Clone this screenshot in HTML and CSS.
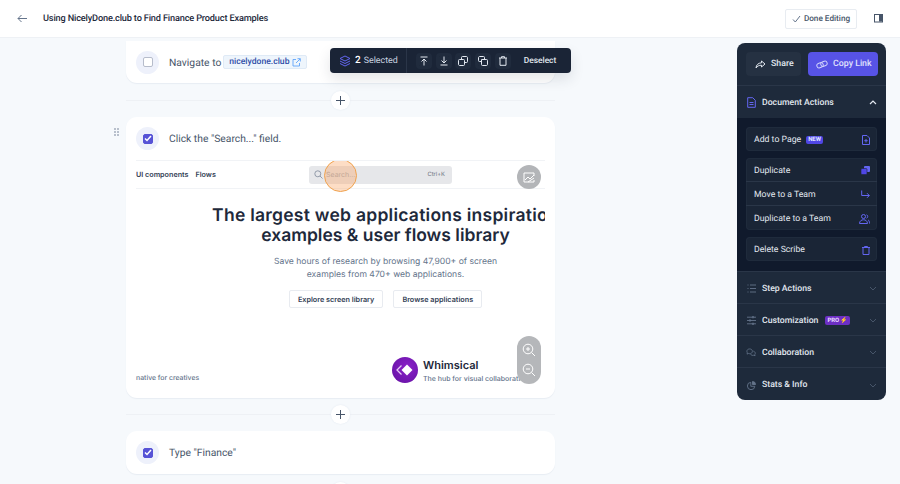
FILE: index.html
```html
<!DOCTYPE html>
<html lang="en">
<head>
<meta charset="utf-8">
<title>Using NicelyDone.club to Find Finance Product Examples</title>
<link rel="stylesheet" href="styles.css">
</head>
<body>
<header class="topbar">
  <svg class="back" width="10" height="9" viewBox="0 0 10 9" fill="none" stroke="#64748b" stroke-width="1"><path d="M10 4.500H1M4.500 1L1 4.500 4.500 8"/></svg>
  <h1 class="doc-title">Using NicelyDone.club to Find Finance Product Examples</h1>
  <button class="done-btn"><svg width="9" height="8" viewBox="0 0 9 8" fill="none" stroke="#64748b" stroke-width="1"><path d="M1 4.500L3.300 7 8 1"/></svg>Done Editing</button>
  <svg class="panel-toggle" width="9" height="9" viewBox="0 0 9 9"><rect x=".5" y=".5" width="8" height="7.500" fill="none" stroke="#475569"/><rect x="5" y="1" width="3" height="6.500" fill="#475569"/></svg>
</header>

<main class="stage">
  <section class="stream">
    <article class="card card-first">
      <div class="step-head">
        <span class="check-wrap"><span class="check"></span></span>
        <span class="step-text">Navigate to</span>
        <span class="link-chip">nicelydone.club
          <svg width="9" height="9" viewBox="0 0 9 9" fill="none" stroke="#60a5fa" stroke-width=".9"><path d="M4 1.500H1v6.500h6.500V5M5.500.7h2.800v2.800M8.200.8L4 5"/></svg>
        </span>
      </div>
    </article>

    <div class="add-row"><button class="add-btn"><svg width="9" height="9" viewBox="0 0 9 9" stroke="#475569" stroke-width="1"><path d="M4.500 0v9M0 4.500h9"/></svg></button></div>

    <article class="card card-shot">
      <span class="grip"><i></i><i></i><i></i><i></i><i></i><i></i></span>
      <div class="step-head">
        <span class="check-wrap"><span class="check on"><svg width="8" height="7" viewBox="0 0 8 7" fill="none" stroke="#fff" stroke-width="1.500"><path d="M1 3.500L3 5.500 7 1"/></svg></span></span>
        <span class="step-text">Click the "Search..." field.</span>
      </div>
      <div class="shot">
        <nav class="shot-nav">
          <div class="shot-links">
            <span>UI components</span>
            <span>Flows</span>
          </div>
          <div class="shot-search">
            <svg width="9" height="9" viewBox="0 0 9 9" fill="none" stroke="#8a93a3" stroke-width=".9"><circle cx="3.800" cy="3.800" r="3"/><path d="M6 6l2.500 2.500"/></svg>
            <span>Search...</span><kbd>Ctrl+K</kbd>
          </div>
        </nav>
        <div class="hero">
          <h2><span class="h2-first">The largest web applications inspiration</span><br>examples &amp; user flows library</h2>
          <p>Save hours of research by browsing 47,900+ of screen<br>examples from 470+ web applications.</p>
          <div class="hero-btns"><span class="hero-btn">Explore screen library</span><span class="hero-btn">Browse applications</span></div>
        </div>
        <div class="ads">
          <span class="ad-left">native for creatives</span>
          <span class="ad-logo"><svg width="18" height="14" viewBox="0 0 18 14"><path d="M11 1.500L16.500 7 11 12.500 5.500 7z" fill="#fff"/><path d="M5.500 2.500L1 7l4.500 4.500" fill="none" stroke="#e6c9f5" stroke-width="1.300"/></svg></span>
          <div class="ad-copy"><strong>Whimsical</strong><span>The hub for visual collaboration</span></div>
        </div>
        <span class="click-ring"></span>
        <span class="shot-fab"><svg width="12" height="11" viewBox="0 0 12 11" fill="none" stroke="#fff" stroke-width="1"><path d="M11 4V1H1v9h10V8M2 8l3-3 2 2 4-4M5 10l6-4"/></svg></span>
        <span class="zoom-pill">
          <svg width="14" height="14" viewBox="0 0 14 14" fill="none" stroke="#fff" stroke-width="1"><circle cx="6" cy="6" r="4.800"/><path d="M9.500 9.500L13 13M4 6h4M6 4v4"/></svg>
          <svg width="14" height="14" viewBox="0 0 14 14" fill="none" stroke="#fff" stroke-width="1"><circle cx="6" cy="6" r="4.800"/><path d="M9.500 9.500L13 13M4 6h4"/></svg>
        </span>
      </div>
    </article>

    <div class="add-row"><button class="add-btn"><svg width="9" height="9" viewBox="0 0 9 9" stroke="#475569" stroke-width="1"><path d="M4.500 0v9M0 4.500h9"/></svg></button></div>

    <article class="card">
      <div class="step-head">
        <span class="check-wrap"><span class="check on"><svg width="8" height="7" viewBox="0 0 8 7" fill="none" stroke="#fff" stroke-width="1.500"><path d="M1 3.500L3 5.500 7 1"/></svg></span></span>
        <span class="step-text">Type "Finance"</span>
      </div>
    </article>

    <div class="add-row"><button class="add-btn"><svg width="9" height="9" viewBox="0 0 9 9" stroke="#475569" stroke-width="1"><path d="M4.500 0v9M0 4.500h9"/></svg></button></div>
  </section>
</main>

<div class="selbar">
  <span class="sel-count">
    <svg width="12" height="12" viewBox="0 0 12 12" fill="none" stroke="#6366f1" stroke-width="1"><path d="M6 1L11 3.500 6 6 1 3.500zM1 6l5 2.500L11 6M1 8.500L6 11l5-2.500"/></svg>
    <b>2</b> Selected
  </span>
  <span class="sel-tools">
    <svg width="10" height="10" viewBox="0 0 10 10" fill="none" stroke="#e2e8f0" stroke-width="1"><path d="M1.500 1h7M5 9.500V3M2.500 5.500L5 3l2.500 2.500"/></svg>
    <svg width="10" height="10" viewBox="0 0 10 10" fill="none" stroke="#e2e8f0" stroke-width="1"><path d="M1.500 9h7M5 .5V7M2.500 4.500L5 7l2.500-2.500"/></svg>
    <svg width="10" height="10" viewBox="0 0 10 10" fill="none" stroke="#e2e8f0" stroke-width="1"><rect x=".5" y="3.500" width="6" height="6" rx="1"/><path d="M3.500 3V1.500a1 1 0 0 1 1-1h4a1 1 0 0 1 1 1v4a1 1 0 0 1-1 1H7"/></svg>
    <svg width="10" height="10" viewBox="0 0 10 10" fill="none" stroke="#e2e8f0" stroke-width="1"><path d="M6.500 3.500V1.500a1 1 0 0 0-1-1h-4a1 1 0 0 0-1 1v3a1 1 0 0 0 1 1h2M3.500 3.500h5a1 1 0 0 1 1 1v4a1 1 0 0 1-1 1h-4a1 1 0 0 1-1-1z"/></svg>
    <svg width="10" height="10" viewBox="0 0 10 10" fill="none" stroke="#e2e8f0" stroke-width="1"><path d="M1 2h8M3.500 2V.7h3V2M2 2v7.300h6V2"/></svg>
  </span>
  <span class="sel-clear">Deselect</span>
</div>

<aside class="panel">
  <div class="panel-top">
    <button class="pbtn pbtn-share"><svg width="11" height="9" viewBox="0 0 11 9" fill="none" stroke="#e2e8f0" stroke-width="1"><path d="M6.500 1L10 4 6.500 7V5.200C4 5.200 2.500 6 1 8c.3-3 2-5 5.500-5.200z"/></svg>Share</button>
    <button class="pbtn pbtn-copy"><svg width="12" height="9" viewBox="0 0 12 9" fill="none" stroke="#cfd2fb" stroke-width="1"><rect x=".7" y="3" width="6.500" height="4.500" rx="2.200" transform="rotate(-20 4 5)"/><rect x="4.800" y="1.500" width="6.500" height="4.500" rx="2.200" transform="rotate(-20 8 4)"/></svg>Copy Link</button>
  </div>
  <div class="sec sec-open">
    <svg class="sec-ic" width="9" height="11" viewBox="0 0 9 11" fill="none" stroke="#6366f1" stroke-width="1"><path d="M.7.700h5l2.600 2.600v7H.7zM2.500 5.500h4M2.500 7.500h4"/></svg>
    <span class="sec-label">Document Actions</span>
    <svg class="sec-chev" width="8" height="5" viewBox="0 0 8 5" fill="none" stroke="#e2e8f0" stroke-width="1.200"><path d="M1 4l3-3 3 3"/></svg>
  </div>
  <div class="actions">
    <div class="agroup">
      <div class="arow"><span>Add to Page</span><em class="new">NEW</em><svg class="aic" width="8" height="10" viewBox="0 0 8 10" fill="none" stroke="#6366f1" stroke-width="1"><path d="M.5.500h4.500L7.500 3v6.500h-7zM4 4v3.500M2.300 5.700h3.400"/></svg></div>
    </div>
    <div class="agroup">
      <div class="arow"><span>Duplicate</span><svg class="aic" width="9" height="9" viewBox="0 0 9 9"><rect x="3" y="0" width="6" height="6" rx="1" fill="#6366f1"/><rect x="0" y="2.500" width="6" height="6" rx="1" fill="#4f46e5" stroke="#1b2638" stroke-width=".6"/></svg></div>
      <div class="arow"><span>Move to a Team</span><svg class="aic" width="9" height="9" viewBox="0 0 9 9" fill="none" stroke="#6366f1" stroke-width="1"><path d="M.7.500V5.500H8.300M6 3.200l2.300 2.300L6 7.800"/></svg></div>
      <div class="arow"><span>Duplicate to a Team</span><svg class="aic" width="11" height="10" viewBox="0 0 11 10" fill="none" stroke="#6366f1" stroke-width="1"><circle cx="4.500" cy="2.500" r="2"/><path d="M.5 9.500c0-5 8-5 8 0zM7.500.8a1.800 1.800 0 0 1 0 3.400M9 5.800c1 .6 1.500 1.800 1.500 3.700"/></svg></div>
    </div>
    <div class="agroup">
      <div class="arow"><span>Delete Scribe</span><svg class="aic" width="8" height="9" viewBox="0 0 8 9" fill="none" stroke="#6366f1" stroke-width="1"><path d="M0 1.500h8M2.500 1.500V.5h3v1M1 1.500v7h6v-7"/></svg></div>
    </div>
  </div>
  <div class="sec">
    <svg class="sec-ic" width="9" height="9" viewBox="0 0 9 9" fill="none" stroke="#64748b" stroke-width=".9"><path d="M3 1h6M3 4.500h6M3 8h6M.5 1h1M.5 4.500h1M.5 8h1"/></svg>
    <span class="sec-label">Step Actions</span>
    <svg class="sec-chev" width="8" height="5" viewBox="0 0 8 5" fill="none" stroke="#475569" stroke-width="1"><path d="M1 1l3 3 3-3"/></svg>
  </div>
  <div class="sec">
    <svg class="sec-ic" width="9" height="9" viewBox="0 0 9 9" fill="none" stroke="#64748b" stroke-width=".9"><path d="M0 1.200h9M0 4.500h9M0 7.800h9"/><circle cx="6" cy="1.200" r=".8"/><circle cx="3" cy="4.500" r=".8"/><circle cx="6" cy="7.800" r=".8"/></svg>
    <span class="sec-label">Customization</span><em class="pro">PRO ⚡</em>
    <svg class="sec-chev" width="8" height="5" viewBox="0 0 8 5" fill="none" stroke="#475569" stroke-width="1"><path d="M1 1l3 3 3-3"/></svg>
  </div>
  <div class="sec">
    <svg class="sec-ic sec-ic-wide" width="11" height="9" viewBox="0 0 11 9" fill="none" stroke="#64748b" stroke-width=".9"><path d="M1 3.200C1 1.500 2.400.6 4 .6s3 .9 3 2.600S5.600 5.800 4 5.800c-.5 0-1 0-1.400-.2L1.200 6.300l.3-1.400C1.100 4.500 1 3.800 1 3.200zM8 3c1.300.3 2.200 1.200 2.200 2.400 0 .6-.2 1-.5 1.400l.3 1.300-1.400-.6c-1.400.5-3 0-3.600-1.200"/></svg>
    <span class="sec-label">Collaboration</span>
    <svg class="sec-chev" width="8" height="5" viewBox="0 0 8 5" fill="none" stroke="#475569" stroke-width="1"><path d="M1 1l3 3 3-3"/></svg>
  </div>
  <div class="sec">
    <svg class="sec-ic" width="9" height="9" viewBox="0 0 9 9" fill="none" stroke="#64748b" stroke-width=".9"><path d="M3.800 1.300a3.700 3.700 0 1 0 4 4H3.800z"/><path d="M5.500.5a3 3 0 0 1 3 3h-3z" fill="#64748b"/></svg>
    <span class="sec-label">Stats &amp; Info</span>
    <svg class="sec-chev" width="8" height="5" viewBox="0 0 8 5" fill="none" stroke="#475569" stroke-width="1"><path d="M1 1l3 3 3-3"/></svg>
  </div>
</aside>
</body>
</html>
```
FILE: styles.css
```css
* { box-sizing: border-box; }
html, body { margin: 0; height: 484px; overflow: hidden; }
body { background: #f6f9fc; font-family: Roboto, "Liberation Sans", sans-serif; color: #334155; position: relative; text-rendering: geometricPrecision; }
button { font-family: inherit; text-rendering: inherit; }

.topbar { height: 38px; background: #fff; border-bottom: 1px solid #eef1f5; display: flex; align-items: center; padding: 0 17px 0 17px; }
.back { flex: none; }
.doc-title { margin: 0 0 0 16px; font-size: 9.200px; letter-spacing: -.17px; font-weight: 500; color: #1e293b; flex: 1; }
.done-btn { height: 20px; width: 72px; display: flex; align-items: center; justify-content: center; gap: 3px; padding: 0; background: #fff; border: 1px solid #e8ecf1; border-radius: 2px; font-size: 8.200px; font-weight: 500; color: #475569; }
.panel-toggle { margin-left: 17px; }

.stage { padding: 3px 0 0 126px; }
.stream { width: 429px; }
.card { background: #fff; border-radius: 11px; box-shadow: 0 1px 1px #e8edf3; position: relative; }
.card-first { border-radius: 0 0 11px 11px; }
.card-first .step-head { height: 42px; }
.step-head { height: 43px; display: flex; align-items: center; padding-left: 10px; }
.check-wrap { width: 23px; height: 23px; border-radius: 50%; background: #eef1fb; display: flex; align-items: center; justify-content: center; flex: none; }
.check { width: 10px; height: 10px; border-radius: 2px; background: #fff; border: 1px solid #b6bccb; display: flex; align-items: center; justify-content: center; }
.check.on { background: #5753d6; border-color: #5753d6; }
.step-text { margin-left: 10px; font-size: 10.300px; color: #475569; }
.link-chip { margin-left: 2px; height: 14px; padding: 0 5px; display: flex; align-items: center; gap: 3px; background: #eef5fc; border: 1px solid #dfeaf6; border-radius: 2px; color: #2f4ea8; font-size: 8.600px; font-weight: 500; }

.add-row { height: 34px; display: flex; align-items: center; justify-content: center; background: linear-gradient(#eef1f5, #eef1f5) center / 100% 1px no-repeat; }
.card-shot + .add-row { height: 33px; }
.add-btn { width: 19px; height: 19px; padding: 0; border: 0; border-radius: 50%; background: #fff; box-shadow: 0 0 2px #e2e8f0; display: flex; align-items: center; justify-content: center; }

.grip { position: absolute; left: -12px; top: 11px; width: 5px; display: grid; grid-template-columns: 2px 2px; gap: 1px; }
.grip i { width: 2px; height: 2px; background: #b8c0cc; }

.card-shot { height: 281px; }
.shot { margin-left: 10px; width: 409px; height: 228px; position: relative; overflow: hidden; background: #fff; border-top: 1px solid #f1f3f6; font-family: Inter, sans-serif; }
.shot-nav { height: 28px; border-bottom: 1px solid #f1f3f6; display: flex; align-items: center; font-size: 7.200px; font-weight: 600; color: #334155; }
.shot-links { width: 173px; display: flex; gap: 7px; }
.shot-search { width: 143px; height: 18px; border-radius: 3px; background: #e6e7ea; display: flex; align-items: center; padding: 0 7px 0 5px; gap: 3px; font-size: 7px; font-weight: 400; color: #9aa3b0; }
.shot-search span { flex: 1; }
.shot-search kbd { font: inherit; font-size: 5.800px; color: #6b7280; }

.hero { width: 499px; text-align: center; padding-top: 17px; }
.hero h2 { margin: 0; font-size: 17.500px; line-height: 20px; font-weight: 600; color: #1e293b; white-space: nowrap; }
.h2-first { letter-spacing: .25px; }
.hero p { margin: 9.500px 0 0; font-size: 8.600px; line-height: 13px; color: #64748b; }
.hero-btns { margin-top: 8.500px; display: flex; justify-content: center; gap: 10px; }
.hero-btn { height: 18px; padding: 0 8px; display: flex; align-items: center; background: #fff; border: 1px solid #e8ebf0; border-radius: 2px; font-size: 7.250px; font-weight: 600; color: #334155; }

.ads { margin-top: 49px; display: flex; align-items: flex-end; white-space: nowrap; }
.ad-left { width: 256px; font-size: 6.900px; font-weight: 500; color: #64748b; margin-bottom: 1px; }
.ad-logo { width: 26px; height: 26px; border-radius: 50%; background: radial-gradient(circle at 60% 40%, #8a22c9, #6210a0); display: flex; align-items: center; justify-content: center; flex: none; }
.ad-copy { margin-left: 5px; display: flex; flex-direction: column; font-size: 7px; color: #64748b; font-weight: 500; }
.ad-copy strong { font-size: 11px; font-weight: 600; color: #1e293b; line-height: 14px; margin-bottom: 2px; }

.click-ring { position: absolute; left: 188px; top: -2px; width: 33px; height: 33px; border-radius: 50%; background: rgba(251, 170, 110, .4); border: 1px solid #f0a24e; }
.shot-fab { position: absolute; left: 381px; top: 4px; width: 24px; height: 24px; border-radius: 50%; background: #b3b5b8; display: flex; align-items: center; justify-content: center; }
.zoom-pill { position: absolute; left: 381px; top: 175px; width: 24px; height: 48px; border-radius: 12px; background: #b5b7ba; display: flex; flex-direction: column; align-items: center; justify-content: center; gap: 6px; }

.selbar { position: absolute; left: 330px; top: 48px; width: 241px; height: 25px; background: #1a2436; border-radius: 4px; box-shadow: 0 6px 14px rgba(30, 41, 59, .12); display: flex; align-items: center; color: #cbd5e1; font-size: 8.900px; }
.sel-count { width: 77px; height: 25px; display: flex; align-items: center; padding-left: 9px; gap: 3px; border-right: 1px solid #2a3548; }
.sel-count b { margin-left: 1px; color: #fff; font-size: 10px; font-weight: 500; }
.sel-tools { margin-left: 12px; display: flex; gap: 9.700px; }
.sel-tools svg { background: #202b3d; outline: 3px solid #202b3d; border-radius: 1px; }
.sel-clear { margin-left: 16px; color: #e2e8f0; font-weight: 500; font-size: 8.400px; }

.panel { position: absolute; left: 737px; top: 43px; width: 149px; height: 357px; background: #1e2a3b; border-radius: 8px; overflow: hidden; }
.panel-top { height: 43px; padding: 9px 8px 0 9px; display: flex; gap: 7px; border-bottom: 1px solid #2a3648; }
.pbtn { height: 24px; border: 0; border-radius: 4px; display: flex; align-items: center; padding: 0; font-size: 8.800px; font-weight: 500; }
.pbtn-share { width: 55px; padding-left: 9px; gap: 5px; background: #253142; color: #e2e8f0; }
.pbtn-copy { width: 70px; padding-left: 8px; gap: 5px; background: #5753e6; color: #e0e2fd; }
.sec { height: 32px; display: flex; align-items: center; padding: 2px 9px 0 10px; border-bottom: 1px solid #2a3648; }
.sec:last-child { border-bottom: 0; }
.sec-open { height: 32px; padding-top: 1px; border-bottom: 0; }
.sec-ic { width: 9px; flex: none; }
.sec-ic-wide { margin-left: -1px; width: 10px; }
.sec-label { margin-left: 6px; font-size: 8.700px; font-weight: 500; color: #e2e8f0; white-space: nowrap; }
.sec-chev { margin-left: auto; }
.actions { height: 154px; background: #101a2c; padding: 9px 9px 0; display: flex; flex-direction: column; gap: 7px; border-bottom: 1px solid #2a3648; }
.agroup { background: #1a2536; border-radius: 4px; box-shadow: inset 0 0 0 1px #1f2b3c; }
.arow { height: 24px; display: flex; align-items: center; padding: 1px 7px 0 8px; font-size: 8.700px; color: #e2e8f0; border-bottom: 1px solid #2a3648; }
.agroup + .agroup .arow { padding-top: 2px; }
.arow:last-child { border-bottom: 0; }
.aic { margin-left: auto; }
.new { margin-left: 5px; padding: 0 2px; height: 8px; line-height: 8px; border-radius: 2px; background: #4f46e5; color: #dfe3ff; font-size: 6px; font-style: normal; font-weight: 700; }
.pro { margin-left: 7px; padding: 0 2px; height: 9px; line-height: 9px; border-radius: 2px; background: #6d2fc4; color: #e9ddff; font-size: 6px; font-style: normal; font-weight: 700; white-space: nowrap; }
```
